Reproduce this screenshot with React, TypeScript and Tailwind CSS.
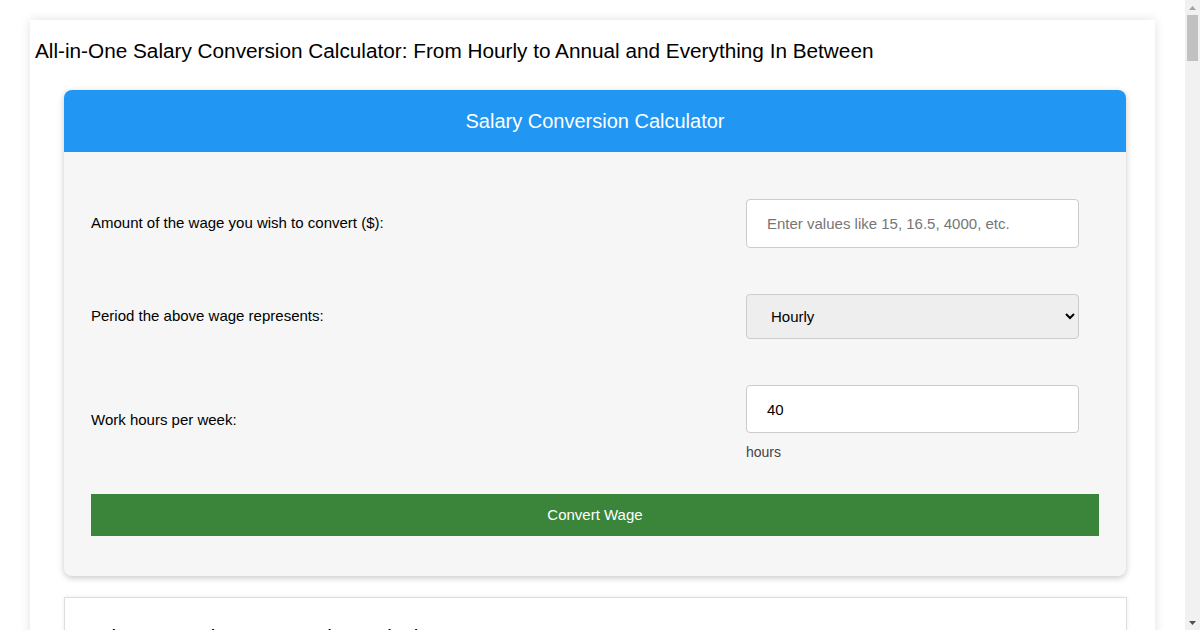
import React from "react";

function Scrollbar() {
  return (
    <div className="flex h-[630px] w-[15px] shrink-0 flex-col items-center bg-[#f1f1f1]">
      <div className="flex h-[15px] w-[15px] items-center justify-center">
        <svg width="7" height="4" viewBox="0 0 7 4"><path d="M0 4 L3.5 0 L7 4 Z" fill="#a3a3a3" /></svg>
      </div>
      <div className="h-[46px] w-[11px] bg-[#c1c1c1]" />
      <div className="flex-1" />
      <div className="flex h-[15px] w-[15px] items-center justify-center">
        <svg width="7" height="4" viewBox="0 0 7 4"><path d="M0 0 L3.5 4 L7 0 Z" fill="#505050" /></svg>
      </div>
    </div>
  );
}

export default function App() {
  return (
    <div className="flex h-[630px] overflow-hidden bg-white text-black" style={{ fontFamily: '"Liberation Sans", Arial, sans-serif' }}>
      <div className="min-w-0 flex-1 overflow-hidden">
        <div className="mx-[30px] mt-[20px] mb-[40px] bg-white shadow-[0_0_10px_rgba(0,0,0,0.12)] pb-[30px]">
          <h1 className="pl-[5px] pt-[19px] text-[20.75px] leading-[24px] font-normal">
            All-in-One Salary Conversion Calculator: From Hourly to Annual and Everything In Between
          </h1>

          <div className="ml-[34px] mr-[29px] mt-[27px] rounded-[8px] bg-[#f6f6f6] shadow-[0_2px_6px_rgba(0,0,0,0.22)]">
            <div className="flex h-[62px] items-center justify-center rounded-t-[8px] bg-[#2196f3] text-[20px] text-white">
              Salary Conversion Calculator
            </div>
            <div className="px-[27px] pt-[47px] pb-[40px] text-[15px]">
              <div className="flex items-center">
                <label className="w-[655px] shrink-0">Amount of the wage you wish to convert ($):</label>
                <input
                  type="text"
                  placeholder="Enter values like 15, 16.5, 4000, etc."
                  className="h-[49px] w-[333px] rounded-[4px] border border-[#ccc] bg-white px-[20px] text-[15px] text-black placeholder:text-[#767676] outline-none"
                />
              </div>
              <div className="mt-[46px] flex items-center">
                <label className="w-[655px] shrink-0">Period the above wage represents:</label>
                <select
                  defaultValue="Hourly"
                  className="h-[45px] w-[333px] rounded-[4px] border border-[#ccc] bg-[#eeeeee] pl-[20px] pr-[4px] text-[15px] text-black outline-none"
                >
                  <option>Hourly</option>
                  <option>Daily</option>
                  <option>Weekly</option>
                  <option>Bi-weekly</option>
                  <option>Semi-monthly</option>
                  <option>Monthly</option>
                  <option>Quarterly</option>
                  <option>Annual</option>
                </select>
              </div>
              <div className="mt-[46px] flex items-center">
                <label className="w-[655px] shrink-0 pb-[6px]">Work hours per week:</label>
                <div className="flex w-[333px] flex-col">
                  <input
                    type="text"
                    defaultValue="40"
                    className="h-[48px] w-[333px] rounded-[4px] border border-[#ccc] bg-white px-[20px] text-[15px] text-black outline-none"
                  />
                  <span className="mt-[9px] text-[14px] leading-[20px] text-[#444]">hours</span>
                </div>
              </div>
              <button className="mt-[32px] flex h-[42px] w-full items-center justify-center bg-[#3b853a] text-[15px] text-white">
                Convert Wage
              </button>
            </div>
          </div>

          <div className="ml-[34px] mr-[28px] mt-[21px] h-[320px] border border-[#dddddd] bg-white px-[27px] pt-[25px] shadow-[0_0_4px_rgba(0,0,0,0.08)]">
            <h2 className="text-[20.75px] leading-[28px] font-normal">What Is a Salary Conversion Calculator?</h2>
          </div>
        </div>
      </div>
      <Scrollbar />
    </div>
  );
}
